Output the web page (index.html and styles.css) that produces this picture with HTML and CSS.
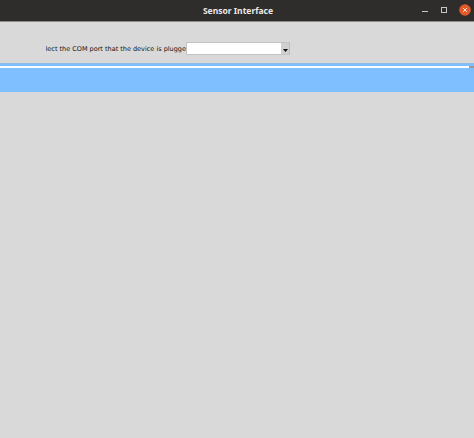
FILE: index.html
```html
<!DOCTYPE html>
<html lang="en">
<head>
<meta charset="utf-8">
<title>Sensor Interface</title>
<link rel="stylesheet" href="styles.css">
</head>
<body>
<div class="window">
  <header class="titlebar">
    <span class="title">Sensor Interface</span>
    <div class="controls">
      <svg class="ctl" width="8" height="8" viewBox="0 0 8 8"><path d="M1 5.5h6" stroke="#c9c7c4" stroke-width="1"/></svg>
      <svg class="ctl" width="8" height="8" viewBox="0 0 8 8"><rect x="1.5" y="1.5" width="5" height="5" fill="none" stroke="#c8c6c3" stroke-width="1"/></svg>
      <svg class="close" width="12" height="12" viewBox="0 0 12 12"><circle cx="6" cy="6" r="5.8" fill="#e2592a"/><path d="M4 4l4 4M8 4l-4 4" stroke="#f6ddd0" stroke-width="1"/></svg>
    </div>
  </header>
  <section class="port-row">
    <div class="port-label"><span>Select the COM port that the device is plugged into</span></div>
    <div class="combo">
      <div class="combo-field"></div>
      <div class="combo-btn"><svg width="5" height="4" viewBox="0 0 5 4"><path d="M0 0h5L2.5 3z" fill="#111"/></svg></div>
    </div>
  </section>
  <section class="band">
    <div class="track"><div class="thumb"></div></div>
  </section>
</div>
</body>
</html>
```
FILE: styles.css
```css
html, body { margin: 0; padding: 0; }
body { width: 474px; height: 438px; overflow: hidden; background: #d9d9d9; }
.window { display: flex; flex-direction: column; height: 438px; background: #d9d9d9; }
.titlebar {
  height: 21px; flex: none; position: relative; display: flex; align-items: center; justify-content: center;
  background: #2f2d2c; border-bottom: 1px solid #8d8b89;
}
.title { font: bold 8.5px "Noto Sans", sans-serif; color: #ece9e6; padding-left: 2px; }
.controls { position: absolute; top: 4px; right: 3px; display: flex; align-items: center; gap: 11px; }
.ctl, .close { display: block; }
.port-row { height: 41px; flex: none; box-sizing: border-box; padding: 20px 0 0 46px; display: flex; align-items: flex-start; }
.port-label {
  width: 140px; height: 13px; box-sizing: border-box; padding-left: 10px; overflow: hidden;
  display: flex; justify-content: center; align-items: center;
  font: 6.5px "DejaVu Sans", sans-serif; color: #111; white-space: nowrap;
}
.port-label span { flex: none; }
.combo { width: 104px; height: 13px; display: flex; box-sizing: border-box; border: 1px solid #c4c4c4; border-right: 0; background: #fff; }
.combo-field { flex: 1; }
.combo-btn { width: 8px; background: #d0d0d0; display: flex; align-items: flex-end; justify-content: center; padding-bottom: 1px; border-right: 1px solid #bbb; }
.band { height: 29px; flex: none; background: #80bfff; padding-top: 2px; box-sizing: border-box; border-top: 1px solid #8fbde8; }
.track { height: 2px; background: #fff; display: flex; justify-content: flex-end; }
.thumb { width: 5px; height: 2px; background: #9a9a9a; }
```
